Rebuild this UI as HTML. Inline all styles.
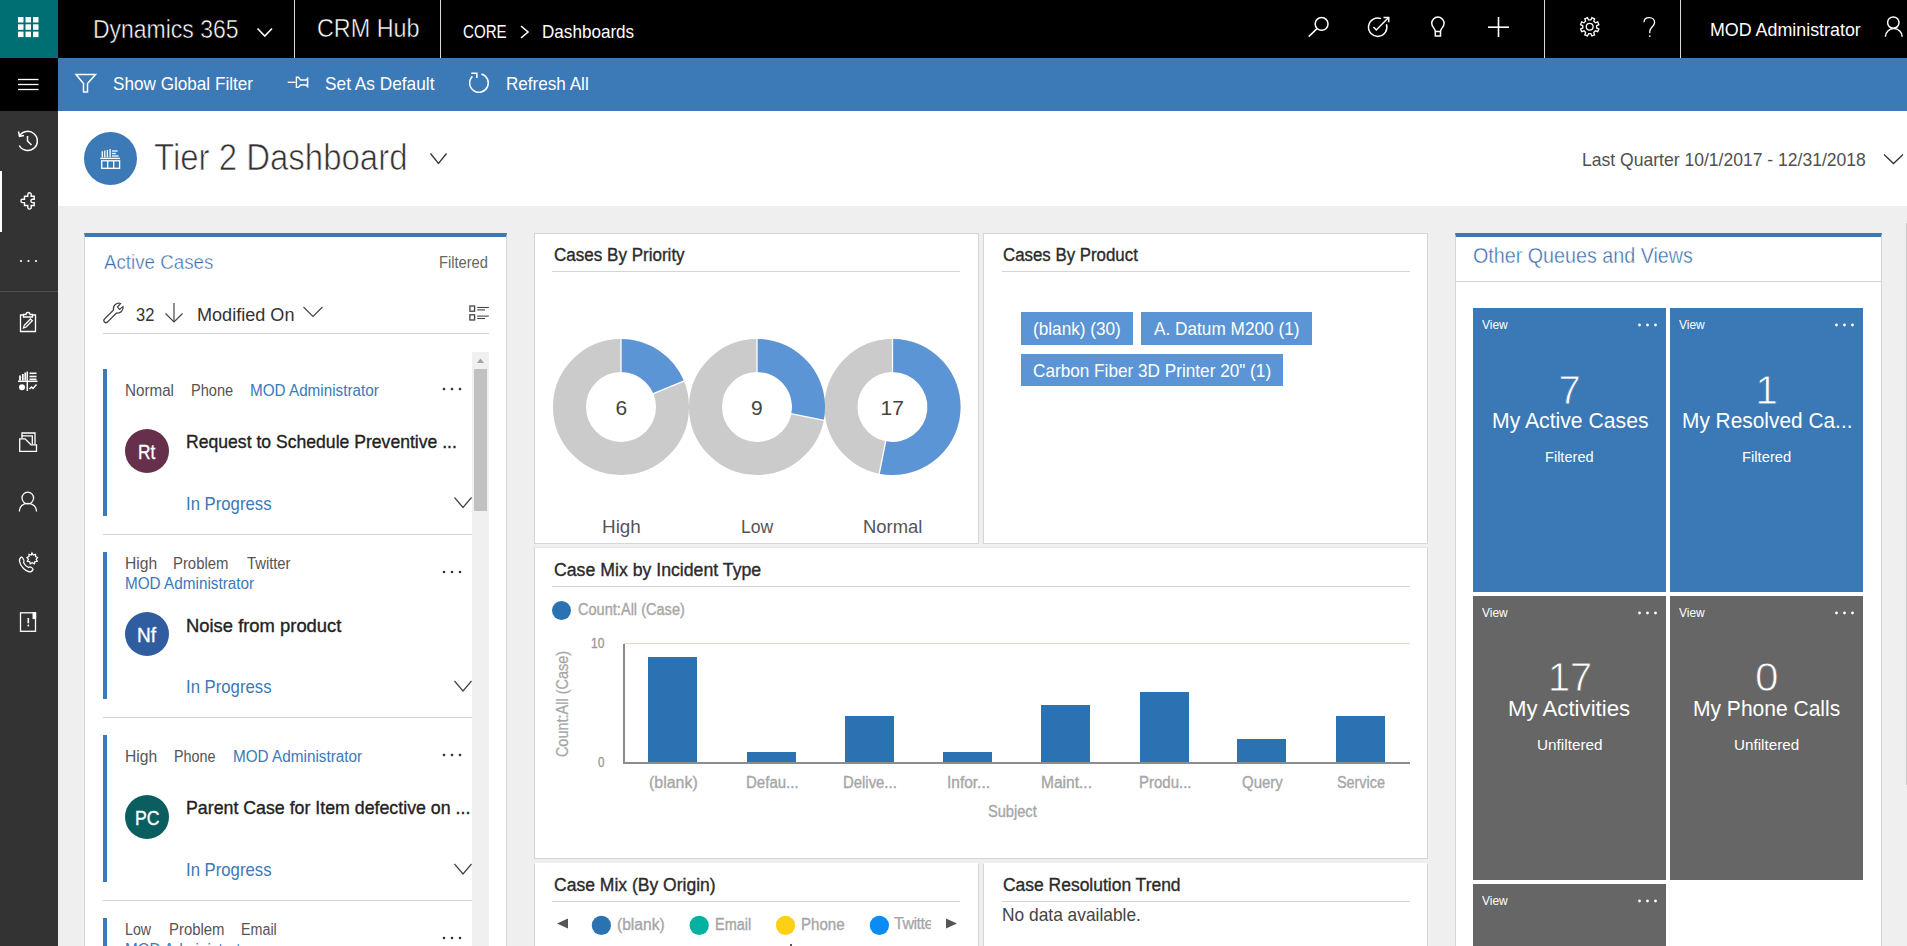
<!DOCTYPE html>
<html><head><meta charset="utf-8"><title>Tier 2 Dashboard</title>
<style>
html,body{margin:0;padding:0}
body{width:1907px;height:946px;overflow:hidden;position:relative;background:#efefef;font-family:"Liberation Sans",sans-serif}
.a{position:absolute}
.t{position:absolute;white-space:nowrap;transform-origin:0 0}
.card{position:absolute;background:#fff;border:1px solid #d6d6d6;box-sizing:border-box}
.hl{position:absolute;height:1px;background:#d4d4d4}
.bar{position:absolute;background:#2b72b2}
.tile{position:absolute;width:193px;height:284px}
svg{position:absolute;overflow:visible}

</style></head><body>
<!-- top bar -->
<div class="a" style="left:0;top:0;width:1907px;height:58px;background:#000"></div>
<div class="a" style="left:0;top:0;width:58px;height:58px;background:#006f73"></div>
<svg style="left:0;top:0" width="58" height="58"><g fill="#fff">
<rect x="18" y="17" width="5.5" height="5.5"/><rect x="25.5" y="17" width="5.5" height="5.5"/><rect x="33" y="17" width="5.5" height="5.5"/>
<rect x="18" y="24.3" width="5.5" height="5.5"/><rect x="25.5" y="24.3" width="5.5" height="5.5"/><rect x="33" y="24.3" width="5.5" height="5.5"/>
<rect x="18" y="31.6" width="5.5" height="5.5"/><rect x="25.5" y="31.6" width="5.5" height="5.5"/><rect x="33" y="31.6" width="5.5" height="5.5"/>
</g></svg>
<div class="a" style="left:294px;top:0;width:1px;height:58px;background:#d8d8d8"></div>
<div class="a" style="left:440px;top:0;width:1px;height:58px;background:#d8d8d8"></div>
<div class="a" style="left:1544px;top:0;width:1px;height:58px;background:#d8d8d8"></div>
<div class="a" style="left:1680px;top:0;width:1px;height:58px;background:#d8d8d8"></div>
<svg style="left:0;top:0" width="1907" height="58" fill="none" stroke="#fff" stroke-width="1.6">
<polyline points="257.5,28.5 264.8,36 272,28.5"/>
<polyline points="521,26 528,32 521,38"/>
<!-- search -->
<circle cx="1321.6" cy="23.9" r="6.4" stroke-width="1.5"/><line x1="1317" y1="28.6" x2="1308.7" y2="36.6" stroke-width="1.5"/>
<!-- target check -->
<path d="M1386.4,24.2 A9.2,9.2 0 1 1 1381,18.6" stroke-width="1.5"/><polyline points="1373.5,27 1376.3,30 1388.3,17.8" stroke-width="1.5"/><polyline points="1383.5,17.4 1388.7,17.4 1388.7,22.2" stroke-width="1.5"/>
<!-- bulb -->
<path d="M1435.3,31.5 C1435.3,28.5 1431.7,27 1431.7,23.3 A6.2,6.2 0 0 1 1444.1,23.3 C1444.1,27 1440.5,28.5 1440.5,31.5 Z M1435.3,31.5 V36 H1440.5 V31.5" stroke-width="1.5"/>
<!-- plus -->
<line x1="1498.5" y1="17" x2="1498.5" y2="37"/><line x1="1488" y1="27.2" x2="1509" y2="27.2"/>
<!-- person -->
<circle cx="1893.3" cy="22.6" r="5.7" stroke-width="1.5"/><path d="M1885.4,36.8 A8.4,8.2 0 0 1 1902.2,36.8" stroke-width="1.5"/>
</svg>
<!-- gear -->
<svg style="left:0;top:0" width="1907" height="58" fill="none" stroke="#fff" stroke-width="1.3"><path d="M1590.86,19.90 L1591.89,17.66 L1594.61,18.79 L1593.76,21.10 L1595.40,22.74 L1597.71,21.89 L1598.84,24.61 L1596.60,25.64 L1596.60,27.96 L1598.84,28.99 L1597.71,31.71 L1595.40,30.86 L1593.76,32.50 L1594.61,34.81 L1591.89,35.94 L1590.86,33.70 L1588.54,33.70 L1587.51,35.94 L1584.79,34.81 L1585.64,32.50 L1584.00,30.86 L1581.69,31.71 L1580.56,28.99 L1582.80,27.96 L1582.80,25.64 L1580.56,24.61 L1581.69,21.89 L1584.00,22.74 L1585.64,21.10 L1584.79,18.79 L1587.51,17.66 L1588.54,19.90 Z"/><circle cx="1589.7" cy="26.8" r="3.4"/><path d="M1644,22.3 C1644,19.2 1646.5,17.6 1649.3,17.6 C1652.4,17.6 1654.6,19.6 1654.6,22.5 C1654.6,26.2 1649.8,27.3 1649.8,31.3 V33.3"/><circle cx="1649.8" cy="36.1" r="0.85" fill="#fff" stroke="none"/></svg>

<!-- left nav -->
<div class="a" style="left:0;top:58px;width:58px;height:888px;background:#333"></div>
<div class="a" style="left:0;top:58px;width:58px;height:53px;background:#000"></div>
<div class="a" style="left:0;top:171px;width:2px;height:61px;background:#fff"></div>
<div class="a" style="left:0;top:291px;width:58px;height:1px;background:#4f4f4f"></div>
<svg style="left:0;top:0" width="58" height="946" fill="none" stroke="#fff" stroke-width="1.3">
<line x1="18" y1="79.5" x2="38.5" y2="79.5"/><line x1="18" y1="84.5" x2="38.5" y2="84.5"/><line x1="18" y1="89.5" x2="38.5" y2="89.5"/>
<!-- history -->
<g stroke-width="1.5"><path d="M19.5,136 A9.6,9.6 0 1 1 19.3,145.5"/><polyline points="18.5,131.5 19.5,136.3 24,135.5"/><polyline points="27.5,136 27.5,141 31.5,145"/></g>
<!-- puzzle -->
<path d="M24.5,196.3 H27.8 V194.4 A1.7,1.7 0 0 1 31.2,194.4 V196.3 H34.2 V199.2 H32.6 A1.7,1.7 0 0 0 32.6,202.6 H34.2 V205.5 H31.2 V207.4 A1.7,1.7 0 0 1 27.8,207.4 V205.5 H24.5 V202.6 H22.6 A1.7,1.7 0 0 1 22.6,199.2 H24.5 Z" stroke-width="1.4"/>
<!-- dots -->
<circle cx="21" cy="261" r="1.1" fill="#fff" stroke="none"/><circle cx="28.5" cy="261" r="1.1" fill="#fff" stroke="none"/><circle cx="36" cy="261" r="1.1" fill="#fff" stroke="none"/>
<!-- clipboard -->
<path d="M23.5,315 H20.5 V331.5 H35.5 V315 H32.5"/><path d="M23.5,317 V314.5 H26 A2,2 0 0 1 30,314.5 H32.5 V317 Z"/><path d="M23.5,328 L24.3,325.3 L30.5,319 L32.3,320.8 L26.1,327 Z"/>
<!-- dashboard -->
<g stroke-width="1.5"><line x1="18" y1="381.3" x2="37.5" y2="381.3"/><line x1="27.3" y1="371.5" x2="27.3" y2="391"/>
<line x1="20" y1="375.5" x2="20" y2="380.5" stroke-width="1.8"/><line x1="22.8" y1="374" x2="22.8" y2="380.5" stroke-width="1.8"/><line x1="25.3" y1="372.5" x2="25.3" y2="380.5" stroke-width="1.8"/>
<line x1="29.5" y1="373.3" x2="36.5" y2="373.3" stroke-width="1.6"/><line x1="29.5" y1="376.5" x2="36.5" y2="376.5" stroke-width="1.6"/><line x1="29.5" y1="379.3" x2="36.5" y2="379.3" stroke-width="1.6"/>
<polyline points="29.5,389 31.5,387 33,388.5 36.5,384.5"/></g>
<circle cx="22" cy="387.3" r="3" fill="#fff" stroke="none"/>
<!-- folder -->
<path d="M19.7,438.8 H25 L31,444.8 H36.5 V451.3 H19.7 Z"/><path d="M22,438.5 V433 H35 V444.5"/><path d="M21.5,435.8 H32.3 V444.5"/>
<!-- person -->
<circle cx="27.8" cy="498" r="5.8"/><path d="M19.4,511.5 C19.4,506.5 23,503.3 27.8,503.3 C32.6,503.3 36.5,506.5 36.5,511.5"/>
<!-- phone gear -->
<path d="M21.5,557 C18.5,558.5 18.5,563 23.5,568.5 C27.5,572.5 31,572.5 32.5,570.5 C33.5,569.3 33,568.5 31.5,567.5 C30,566.5 29.5,566.5 28.5,567.5 C27,567 24.5,564.5 23.5,562.5 C24.5,561.5 24.5,561 23.5,559.5 C22.5,557.5 22,556.8 21.5,557 Z"/>
<path d="M32,553 L33.3,555 L35.5,554.3 L35.6,556.5 L37.5,557.5 L36.2,559.3 L37.2,561.3 L35,561.6 L34.3,563.8 L32.3,562.7 L30.3,563.8 L29.6,561.6 L27.4,561.3 L28.4,559.3 L27,557.5 L29,556.5 L29,554.3 L31.2,555 Z"/>
<!-- book -->
<rect x="20.5" y="612.8" width="15" height="18.5"/><rect x="33.2" y="612.8" width="2.3" height="5.6" fill="#fff"/><line x1="28.3" y1="618" x2="28.3" y2="623.3" stroke-width="1.6"/><circle cx="28.3" cy="625.5" r="0.9" fill="#fff" stroke="none"/>
</svg>

<!-- command bar -->
<div class="a" style="left:58px;top:58px;width:1849px;height:53px;background:#3b79b7"></div>
<svg style="left:0;top:58px" width="600" height="53" fill="none" stroke="#fff" stroke-width="1.5">
<path d="M76,16.5 H95.5 L87.5,25.5 V34 H83.5 V25.5 Z"/>
<path d="M287.7,24.3 H295.5" stroke-width="1.3"/><path d="M296.4,19.3 H298.5 L300.5,22 H306 L307.6,20.4 V28.6 L306,27 H300.5 L298.5,29.4 H296.4 Z" stroke-width="1.4"/>
<path d="M481.4,16 A9.3,9.3 0 1 1 472.4,18.4" stroke-width="1.5"/><polyline points="471.3,15.3 476.8,15.3 476.8,20" stroke-width="1.6"/>
</svg>

<!-- header -->
<div class="a" style="left:58px;top:111px;width:1849px;height:95px;background:#fff"></div>
<div class="a" style="left:84px;top:132px;width:53px;height:53px;border-radius:50%;background:#3b79b7"></div>
<svg style="left:0;top:0" width="1907" height="206" fill="none" stroke="#fff" stroke-width="1.3">
<g stroke-width="1.3"><line x1="100.3" y1="158.4" x2="120" y2="158.4"/>
<rect x="101.7" y="160.8" width="17.9" height="7.5"/><line x1="107.7" y1="160.8" x2="107.7" y2="168.3"/><line x1="113.7" y1="160.8" x2="113.7" y2="168.3"/>
<line x1="102.3" y1="151.2" x2="102.3" y2="157.5"/><line x1="104.8" y1="150.4" x2="104.8" y2="157.5"/><line x1="107.4" y1="150" x2="107.4" y2="157.5"/><line x1="110.1" y1="149" x2="110.1" y2="157.5"/>
<line x1="112" y1="151" x2="117.6" y2="151"/><line x1="112" y1="153.5" x2="115.8" y2="153.5"/><line x1="112" y1="156" x2="118.5" y2="156"/></g>
<polyline points="430.5,153.5 438.5,163.5 446.5,153.5" stroke="#333"/>
<polyline points="1884,154.5 1893.5,163.5 1903,154.5" stroke="#333"/>
</svg>

<!-- page right line -->
<div class="a" style="left:1906px;top:223px;width:1px;height:562px;background:#cfcfcf"></div>

<!-- Active cases card -->
<div class="card" style="left:84px;top:233px;width:423px;height:760px;border-top:4px solid #3b79b7"></div>
<div class="hl" style="left:103px;top:333px;width:386px"></div>
<svg style="left:0;top:0" width="520" height="946" fill="none" stroke="#444" stroke-width="1.2">
<!-- wrench -->
<path d="M104.5,319 L113.5,310 A5.5,5.5 0 0 1 120.5,303.5 L117.5,307 L119.5,309.5 L123,306.5 A5.5,5.5 0 0 1 116.5,313 L107.5,322 A2,2 0 0 1 104.5,319 Z"/>
<!-- arrow down -->
<line x1="174" y1="303" x2="174" y2="322"/><polyline points="165.5,313.5 174,322 182.5,313.5"/>
<!-- chevron -->
<polyline points="303.5,307 313,316.5 322.5,307"/>
<!-- list icon -->
<rect x="469.9" y="306" width="4.7" height="5.2" stroke-width="1.3"/><rect x="469.9" y="314.8" width="4.7" height="5.2" stroke-width="1.3"/>
<line x1="477.2" y1="307.5" x2="488.8" y2="307.5" stroke-width="1.1"/><line x1="477.2" y1="309.9" x2="485" y2="309.9" stroke-width="1.1"/><line x1="477.2" y1="316.1" x2="488.8" y2="316.1" stroke-width="1.1"/><line x1="477.2" y1="318.5" x2="485" y2="318.5" stroke-width="1.1"/>
</svg>
<!-- scrollbar -->
<div class="a" style="left:472px;top:352px;width:17px;height:600px;background:#f0f0f0"></div>
<div class="a" style="left:474px;top:369px;width:13px;height:142px;background:#c1c1c1"></div>
<svg style="left:0;top:0" width="520" height="946"><polygon points="477,363 480.5,358.5 484,363" fill="#a3a3a3"/></svg>
<!-- items -->
<div class="a" style="left:103px;top:369px;width:4px;height:147px;background:#3b79b7"></div>
<div class="a" style="left:103px;top:552px;width:4px;height:147px;background:#3b79b7"></div>
<div class="a" style="left:103px;top:735px;width:4px;height:147px;background:#3b79b7"></div>
<div class="a" style="left:103px;top:918px;width:4px;height:40px;background:#3b79b7"></div>
<div class="hl" style="left:103px;top:534px;width:369px"></div>
<div class="hl" style="left:103px;top:717px;width:369px"></div>
<div class="hl" style="left:103px;top:900px;width:369px"></div>
<div class="a" style="left:125px;top:429px;width:44px;height:44px;border-radius:50%;background:#662f4b"></div>
<div class="a" style="left:125px;top:612px;width:44px;height:44px;border-radius:50%;background:#2f5d9f"></div>
<div class="a" style="left:125px;top:795px;width:44px;height:44px;border-radius:50%;background:#0b5e5f"></div>
<svg style="left:0;top:0" width="520" height="946" fill="#333">
<circle cx="444" cy="389" r="1.3"/><circle cx="452" cy="389" r="1.3"/><circle cx="460" cy="389" r="1.3"/>
<circle cx="444" cy="572" r="1.3"/><circle cx="452" cy="572" r="1.3"/><circle cx="460" cy="572" r="1.3"/>
<circle cx="444" cy="755" r="1.3"/><circle cx="452" cy="755" r="1.3"/><circle cx="460" cy="755" r="1.3"/>
<circle cx="444" cy="938" r="1.3"/><circle cx="452" cy="938" r="1.3"/><circle cx="460" cy="938" r="1.3"/>
<g fill="none" stroke="#444" stroke-width="1.2">
<polyline points="454.5,497.5 463,507.5 471.5,497.5"/>
<polyline points="454.5,681 463,691 471.5,681"/>
<polyline points="454.5,864 463,874 471.5,864"/>
</g></svg>

<!-- priority card -->
<div class="card" style="left:534px;top:233px;width:445px;height:311px"></div>
<div class="hl" style="left:552px;top:271px;width:408px"></div>
<svg style="left:0;top:0" width="1000" height="560">
<g fill="none" stroke-width="33">
<circle cx="621" cy="407" r="51.5" stroke="#cbcbcb"/>
<circle cx="757" cy="407" r="51.5" stroke="#cbcbcb"/>
<circle cx="892.5" cy="407" r="51.5" stroke="#cbcbcb"/>
</g>
<path d="M621.00,339.00 A68,68 0 0 1 683.82,380.98 L653.34,393.61 A35,35 0 0 0 621.00,372.00 Z" fill="#5b95d5"/>
<line x1="621.00" y1="372.50" x2="621.00" y2="338.50" stroke="#fff" stroke-width="1.3"/>
<line x1="652.87" y1="393.80" x2="684.29" y2="380.79" stroke="#fff" stroke-width="1.3"/>
<path d="M757.00,339.00 A68,68 0 0 1 823.69,420.27 L791.33,413.83 A35,35 0 0 0 757.00,372.00 Z" fill="#5b95d5"/>
<line x1="757.00" y1="372.50" x2="757.00" y2="338.50" stroke="#fff" stroke-width="1.3"/>
<line x1="790.84" y1="413.73" x2="824.18" y2="420.36" stroke="#fff" stroke-width="1.3"/>
<path d="M892.50,339.00 A68,68 0 1 1 879.23,473.69 L885.67,441.33 A35,35 0 1 0 892.50,372.00 Z" fill="#5b95d5"/>
<line x1="892.50" y1="372.50" x2="892.50" y2="338.50" stroke="#fff" stroke-width="1.3"/>
<line x1="885.77" y1="440.84" x2="879.14" y2="474.18" stroke="#fff" stroke-width="1.3"/>

</svg>
<!-- product card -->
<div class="card" style="left:983px;top:233px;width:445px;height:311px"></div>
<div class="hl" style="left:1002px;top:271px;width:408px"></div>
<div class="a" style="left:1021px;top:312px;width:112px;height:33px;background:#5b95d5"></div>
<div class="a" style="left:1141px;top:312px;width:171px;height:33px;background:#5b95d5"></div>
<div class="a" style="left:1021px;top:354px;width:262px;height:32px;background:#5b95d5"></div>

<!-- incident card -->
<div class="card" style="left:534px;top:547px;width:894px;height:312px;border-top-color:#e6e6e6"></div>
<div class="hl" style="left:552px;top:586px;width:858px"></div>
<div class="a" style="left:552px;top:601px;width:19px;height:19px;border-radius:50%;background:#2b72b2"></div>
<div class="a" style="left:624px;top:643px;width:786px;height:1px;background:#bfe0f8"></div>
<div class="a" style="left:623px;top:644px;width:2px;height:120px;background:#8b8b91"></div>
<div class="a" style="left:623px;top:762px;width:787px;height:2px;background:#8b8b91"></div>
<div class="bar" style="left:648px;top:657px;width:49px;height:105px"></div>
<div class="bar" style="left:747px;top:752px;width:49px;height:10px"></div>
<div class="bar" style="left:845px;top:716px;width:49px;height:46px"></div>
<div class="bar" style="left:943px;top:752px;width:49px;height:10px"></div>
<div class="bar" style="left:1041px;top:705px;width:49px;height:57px"></div>
<div class="bar" style="left:1140px;top:692px;width:49px;height:70px"></div>
<div class="bar" style="left:1237px;top:739px;width:49px;height:23px"></div>
<div class="bar" style="left:1336px;top:716px;width:49px;height:46px"></div>
<div class="t" style="left:503.7px;top:696px;width:118px;text-align:center;font-size:16px;line-height:16px;color:#a6a6a6;-webkit-text-stroke:0.25px currentColor;transform-origin:50% 50%;transform:rotate(-90deg) scaleX(0.905)">Count:All (Case)</div>

<!-- origin card -->
<div class="card" style="left:534px;top:863px;width:445px;height:100px;border-top-color:#fff"></div>
<div class="hl" style="left:552px;top:901px;width:408px"></div>
<svg style="left:0;top:0" width="1000" height="946">
<polygon points="557,923.5 568,918.5 568,928.5" fill="#555"/>
<polygon points="957,923.5 946,918.5 946,928.5" fill="#555"/>
<circle cx="601.4" cy="925.4" r="9.6" fill="#2b72b2"/>
<circle cx="699.2" cy="925.4" r="9.6" fill="#01b2a0"/>
<circle cx="785.5" cy="925.4" r="9.6" fill="#fdd017"/>
<circle cx="879.4" cy="925.4" r="9.6" fill="#0a8cf5"/>
</svg>
<div class="t" style="left:894px;top:916px;width:37px;overflow:hidden;font-size:16px;line-height:16px;color:#a6a6a6;-webkit-text-stroke:0.25px currentColor;letter-spacing:-0.5px">Twitter</div>
<div class="a" style="left:789.5px;top:944px;width:2px;height:2px;background:#555"></div>
<!-- trend card -->
<div class="card" style="left:983px;top:863px;width:445px;height:100px;border-top-color:#fff"></div>
<div class="hl" style="left:1002px;top:901px;width:408px"></div>

<!-- queues card -->
<div class="card" style="left:1455px;top:233px;width:427px;height:760px;border-top:4px solid #3b79b7"></div>
<div class="hl" style="left:1456px;top:281px;width:425px"></div>
<div class="tile" style="left:1473px;top:308px;background:#3b78b6"></div>
<div class="tile" style="left:1670px;top:308px;background:#3b78b6"></div>
<div class="tile" style="left:1473px;top:596px;background:#666"></div>
<div class="tile" style="left:1670px;top:596px;background:#666"></div>
<div class="tile" style="left:1473px;top:884px;background:#666"></div>
<svg style="left:0;top:0" width="1907" height="946" fill="#fff">
<circle cx="1639.5" cy="325" r="1.4"/><circle cx="1647.5" cy="325" r="1.4"/><circle cx="1655.5" cy="325" r="1.4"/>
<circle cx="1836.5" cy="325" r="1.4"/><circle cx="1844.5" cy="325" r="1.4"/><circle cx="1852.5" cy="325" r="1.4"/>
<circle cx="1639.5" cy="613" r="1.4"/><circle cx="1647.5" cy="613" r="1.4"/><circle cx="1655.5" cy="613" r="1.4"/>
<circle cx="1836.5" cy="613" r="1.4"/><circle cx="1844.5" cy="613" r="1.4"/><circle cx="1852.5" cy="613" r="1.4"/>
<circle cx="1639.5" cy="901" r="1.4"/><circle cx="1647.5" cy="901" r="1.4"/><circle cx="1655.5" cy="901" r="1.4"/>
</svg>

<div class="t" style="left:93.2px;top:16.5px;font-size:25px;line-height:25px;transform:scaleX(0.9186);color:#fff;font-weight:400;-webkit-text-stroke:0.5px #000;">Dynamics 365</div>
<div class="t" style="left:316.5px;top:15.0px;font-size:26px;line-height:26px;transform:scaleX(0.8982);color:#fff;font-weight:400;-webkit-text-stroke:0.5px #000;">CRM Hub</div>
<div class="t" style="left:462.5px;top:22.8px;font-size:18.6px;line-height:18.6px;transform:scaleX(0.8135);color:#fff;font-weight:400;">CORE</div>
<div class="t" style="left:542.1px;top:22.8px;font-size:18.6px;line-height:18.6px;transform:scaleX(0.9192);color:#fff;font-weight:400;">Dashboards</div>
<div class="t" style="left:1709.5px;top:19.7px;font-size:19px;line-height:19px;transform:scaleX(0.9394);color:#fff;font-weight:400;">MOD Administrator</div>
<div class="t" style="left:112.5px;top:73.7px;font-size:19px;line-height:19px;transform:scaleX(0.9019);color:#fff;font-weight:400;">Show Global Filter</div>
<div class="t" style="left:324.7px;top:73.7px;font-size:19px;line-height:19px;transform:scaleX(0.9092);color:#fff;font-weight:400;">Set As Default</div>
<div class="t" style="left:506.1px;top:73.7px;font-size:19px;line-height:19px;transform:scaleX(0.9000);color:#fff;font-weight:400;">Refresh All</div>
<div class="t" style="left:154.1px;top:140.0px;font-size:36px;line-height:36px;transform:scaleX(0.9158);color:#333333;font-weight:400;-webkit-text-stroke:0.7px #fff;">Tier 2 Dashboard</div>
<div class="t" style="left:1581.5px;top:150.0px;font-size:19px;line-height:19px;transform:scaleX(0.9235);color:#505050;font-weight:400;">Last Quarter 10/1/2017 - 12/31/2018</div>
<div class="t" style="left:103.6px;top:252.0px;font-size:20px;line-height:20px;transform:scaleX(0.9371);color:#3a6db0;font-weight:400;-webkit-text-stroke:0.4px #fff;">Active Cases</div>
<div class="t" style="left:438.9px;top:255.0px;font-size:16px;line-height:16px;transform:scaleX(0.9154);color:#666;font-weight:400;">Filtered</div>
<div class="t" style="left:135.9px;top:305.5px;font-size:18px;line-height:18px;transform:scaleX(0.9158);color:#333;font-weight:400;">32</div>
<div class="t" style="left:197.2px;top:305.5px;font-size:18px;line-height:18px;transform:scaleX(1.0042);color:#333;font-weight:400;">Modified On</div>
<div class="t" style="left:124.8px;top:383.0px;font-size:16px;line-height:16px;transform:scaleX(0.9500);color:#555555;font-weight:400;">Normal</div>
<div class="t" style="left:190.9px;top:383.0px;font-size:16px;line-height:16px;transform:scaleX(0.9111);color:#555555;font-weight:400;">Phone</div>
<div class="t" style="left:250.0px;top:383.0px;font-size:16px;line-height:16px;transform:scaleX(0.9530);color:#3b79b7;font-weight:400;">MOD Administrator</div>
<div class="t" style="left:137.9px;top:442.0px;font-size:20px;line-height:20px;transform:scaleX(0.8650);color:#fff;font-weight:400;-webkit-text-stroke:0.35px currentColor;">Rt</div>
<div class="t" style="left:186.1px;top:432.0px;font-size:19px;line-height:19px;transform:scaleX(0.9259);color:#222;font-weight:400;-webkit-text-stroke:0.35px currentColor;">Request to Schedule Preventive ...</div>
<div class="t" style="left:186.1px;top:494.0px;font-size:19px;line-height:19px;transform:scaleX(0.8802);color:#3b79b7;font-weight:400;">In Progress</div>
<div class="t" style="left:124.6px;top:556.0px;font-size:16px;line-height:16px;transform:scaleX(0.9774);color:#555555;font-weight:400;">High</div>
<div class="t" style="left:173.4px;top:556.0px;font-size:16px;line-height:16px;transform:scaleX(0.9293);color:#555555;font-weight:400;">Problem</div>
<div class="t" style="left:247.2px;top:556.0px;font-size:16px;line-height:16px;transform:scaleX(0.9234);color:#555555;font-weight:400;">Twitter</div>
<div class="t" style="left:124.6px;top:576.2px;font-size:16px;line-height:16px;transform:scaleX(0.9552);color:#3b79b7;font-weight:400;">MOD Administrator</div>
<div class="t" style="left:136.6px;top:625.0px;font-size:20px;line-height:20px;transform:scaleX(0.9500);color:#fff;font-weight:400;-webkit-text-stroke:0.35px currentColor;">Nf</div>
<div class="t" style="left:186.0px;top:615.5px;font-size:19px;line-height:19px;transform:scaleX(0.9681);color:#222;font-weight:400;-webkit-text-stroke:0.35px currentColor;">Noise from product</div>
<div class="t" style="left:186.1px;top:677.0px;font-size:19px;line-height:19px;transform:scaleX(0.8802);color:#3b79b7;font-weight:400;">In Progress</div>
<div class="t" style="left:124.6px;top:749.4px;font-size:16px;line-height:16px;transform:scaleX(0.9774);color:#555555;font-weight:400;">High</div>
<div class="t" style="left:173.5px;top:749.4px;font-size:16px;line-height:16px;transform:scaleX(0.8978);color:#555555;font-weight:400;">Phone</div>
<div class="t" style="left:232.5px;top:749.4px;font-size:16px;line-height:16px;transform:scaleX(0.9552);color:#3b79b7;font-weight:400;">MOD Administrator</div>
<div class="t" style="left:134.6px;top:808.0px;font-size:20px;line-height:20px;transform:scaleX(0.8846);color:#fff;font-weight:400;-webkit-text-stroke:0.35px currentColor;">PC</div>
<div class="t" style="left:186.1px;top:798.0px;font-size:19px;line-height:19px;transform:scaleX(0.9348);color:#222;font-weight:400;-webkit-text-stroke:0.35px currentColor;">Parent Case for Item defective on ...</div>
<div class="t" style="left:186.1px;top:860.0px;font-size:19px;line-height:19px;transform:scaleX(0.8802);color:#3b79b7;font-weight:400;">In Progress</div>
<div class="t" style="left:124.5px;top:921.6px;font-size:16px;line-height:16px;transform:scaleX(0.8897);color:#555555;font-weight:400;">Low</div>
<div class="t" style="left:168.5px;top:921.6px;font-size:16px;line-height:16px;transform:scaleX(0.9310);color:#555555;font-weight:400;">Problem</div>
<div class="t" style="left:240.9px;top:921.6px;font-size:16px;line-height:16px;transform:scaleX(0.8947);color:#555555;font-weight:400;">Email</div>
<div class="t" style="left:124.6px;top:941.8px;font-size:16px;line-height:16px;transform:scaleX(0.9552);color:#3b79b7;font-weight:400;">MOD Administrator</div>
<div class="t" style="left:553.8px;top:246.0px;font-size:18px;line-height:18px;transform:scaleX(0.9464);color:#2b2b2b;font-weight:400;-webkit-text-stroke:0.35px currentColor;">Cases By Priority</div>
<div class="t" style="left:615.5px;top:397.3px;font-size:21px;line-height:21px;transform:scaleX(1.0000);color:#444;font-weight:400;">6</div>
<div class="t" style="left:751.1px;top:397.3px;font-size:21px;line-height:21px;transform:scaleX(1.0000);color:#444;font-weight:400;">9</div>
<div class="t" style="left:880.5px;top:397.3px;font-size:21px;line-height:21px;transform:scaleX(1.0000);color:#444;font-weight:400;">17</div>
<div class="t" style="left:602.4px;top:518.7px;font-size:17.5px;line-height:17.5px;transform:scaleX(1.0794);color:#555555;font-weight:400;">High</div>
<div class="t" style="left:740.5px;top:518.7px;font-size:17.5px;line-height:17.5px;transform:scaleX(1.0065);color:#555555;font-weight:400;">Low</div>
<div class="t" style="left:863.4px;top:518.7px;font-size:17.5px;line-height:17.5px;transform:scaleX(1.0509);color:#555555;font-weight:400;">Normal</div>
<div class="t" style="left:1003.1px;top:246.0px;font-size:18px;line-height:18px;transform:scaleX(0.9359);color:#2b2b2b;font-weight:400;-webkit-text-stroke:0.35px currentColor;">Cases By Product</div>
<div class="t" style="left:1033.1px;top:319.2px;font-size:19px;line-height:19px;transform:scaleX(0.9042);color:#fff;font-weight:400;">(blank) (30)</div>
<div class="t" style="left:1154.0px;top:319.2px;font-size:19px;line-height:19px;transform:scaleX(0.9062);color:#fff;font-weight:400;">A. Datum M200 (1)</div>
<div class="t" style="left:1032.6px;top:361.2px;font-size:19px;line-height:19px;transform:scaleX(0.9042);color:#fff;font-weight:400;">Carbon Fiber 3D Printer 20&quot; (1)</div>
<div class="t" style="left:553.8px;top:560.6px;font-size:18px;line-height:18px;transform:scaleX(0.9829);color:#2b2b2b;font-weight:400;-webkit-text-stroke:0.35px currentColor;">Case Mix by Incident Type</div>
<div class="t" style="left:577.8px;top:602.0px;font-size:16px;line-height:16px;transform:scaleX(0.9103);color:#a6a6a6;font-weight:400;-webkit-text-stroke:0.35px currentColor;">Count:All (Case)</div>
<div class="t" style="left:590.8px;top:636.0px;font-size:14px;line-height:14px;transform:scaleX(0.8600);color:#999;font-weight:400;-webkit-text-stroke:0.35px currentColor;">10</div>
<div class="t" style="left:598.0px;top:755.0px;font-size:14px;line-height:14px;transform:scaleX(0.8250);color:#999;font-weight:400;-webkit-text-stroke:0.35px currentColor;">0</div>
<div class="t" style="left:649.2px;top:774.7px;font-size:16px;line-height:16px;transform:scaleX(0.9957);color:#a6a6a6;font-weight:400;-webkit-text-stroke:0.35px currentColor;">(blank)</div>
<div class="t" style="left:745.8px;top:774.7px;font-size:16px;line-height:16px;transform:scaleX(0.9389);color:#a6a6a6;font-weight:400;-webkit-text-stroke:0.35px currentColor;">Defau...</div>
<div class="t" style="left:843.3px;top:774.7px;font-size:16px;line-height:16px;transform:scaleX(0.9304);color:#a6a6a6;font-weight:400;-webkit-text-stroke:0.35px currentColor;">Delive...</div>
<div class="t" style="left:946.5px;top:774.7px;font-size:16px;line-height:16px;transform:scaleX(0.9674);color:#a6a6a6;font-weight:400;-webkit-text-stroke:0.35px currentColor;">Infor...</div>
<div class="t" style="left:1040.8px;top:774.7px;font-size:16px;line-height:16px;transform:scaleX(0.9725);color:#a6a6a6;font-weight:400;-webkit-text-stroke:0.35px currentColor;">Maint...</div>
<div class="t" style="left:1138.5px;top:774.7px;font-size:16px;line-height:16px;transform:scaleX(0.9370);color:#a6a6a6;font-weight:400;-webkit-text-stroke:0.35px currentColor;">Produ...</div>
<div class="t" style="left:1242.2px;top:774.7px;font-size:16px;line-height:16px;transform:scaleX(0.9341);color:#a6a6a6;font-weight:400;-webkit-text-stroke:0.35px currentColor;">Query</div>
<div class="t" style="left:1337.2px;top:774.7px;font-size:16px;line-height:16px;transform:scaleX(0.8981);color:#a6a6a6;font-weight:400;-webkit-text-stroke:0.35px currentColor;">Service</div>
<div class="t" style="left:987.8px;top:804.0px;font-size:16px;line-height:16px;transform:scaleX(0.9130);color:#a6a6a6;font-weight:400;-webkit-text-stroke:0.35px currentColor;">Subject</div>
<div class="t" style="left:553.7px;top:876.0px;font-size:18px;line-height:18px;transform:scaleX(0.9739);color:#2b2b2b;font-weight:400;-webkit-text-stroke:0.35px currentColor;">Case Mix (By Origin)</div>
<div class="t" style="left:617.1px;top:916.7px;font-size:16px;line-height:16px;transform:scaleX(0.9745);color:#a6a6a6;font-weight:400;-webkit-text-stroke:0.35px currentColor;">(blank)</div>
<div class="t" style="left:714.8px;top:916.7px;font-size:16px;line-height:16px;transform:scaleX(0.9051);color:#a6a6a6;font-weight:400;-webkit-text-stroke:0.35px currentColor;">Email</div>
<div class="t" style="left:800.7px;top:916.7px;font-size:16px;line-height:16px;transform:scaleX(0.9400);color:#a6a6a6;font-weight:400;-webkit-text-stroke:0.35px currentColor;">Phone</div>
<div class="t" style="left:1002.9px;top:876.0px;font-size:18px;line-height:18px;transform:scaleX(0.9698);color:#2b2b2b;font-weight:400;-webkit-text-stroke:0.35px currentColor;">Case Resolution Trend</div>
<div class="t" style="left:1002.0px;top:904.7px;font-size:19px;line-height:19px;transform:scaleX(0.9133);color:#444;font-weight:400;">No data available.</div>
<div class="t" style="left:1472.5px;top:245.4px;font-size:22px;line-height:22px;transform:scaleX(0.8959);color:#3a6db0;font-weight:400;-webkit-text-stroke:0.4px #fff;">Other Queues and Views</div>
<div class="t" style="left:1482.2px;top:318.9px;font-size:12.5px;line-height:12.5px;transform:scaleX(0.9593);color:#fff;font-weight:400;">View</div>
<div class="t" style="left:1558.4px;top:369.8px;font-size:40px;line-height:40px;transform:scaleX(1.0000);color:#fff;font-weight:400;-webkit-text-stroke:0.8px #3b78b6;">7</div>
<div class="t" style="left:1491.5px;top:409.7px;font-size:22px;line-height:22px;transform:scaleX(0.9627);color:#fff;font-weight:400;">My Active Cases</div>
<div class="t" style="left:1545.0px;top:448.7px;font-size:15px;line-height:15px;transform:scaleX(0.9714);color:#fff;font-weight:400;">Filtered</div>
<div class="t" style="left:1679.2px;top:318.9px;font-size:12.5px;line-height:12.5px;transform:scaleX(0.9593);color:#fff;font-weight:400;">View</div>
<div class="t" style="left:1755.4px;top:369.8px;font-size:40px;line-height:40px;transform:scaleX(1.0000);color:#fff;font-weight:400;-webkit-text-stroke:0.8px #3b78b6;">1</div>
<div class="t" style="left:1682.3px;top:409.7px;font-size:22px;line-height:22px;transform:scaleX(0.9486);color:#fff;font-weight:400;">My Resolved Ca...</div>
<div class="t" style="left:1741.6px;top:448.7px;font-size:15px;line-height:15px;transform:scaleX(0.9857);color:#fff;font-weight:400;">Filtered</div>
<div class="t" style="left:1482.2px;top:607.1px;font-size:12.5px;line-height:12.5px;transform:scaleX(0.9593);color:#fff;font-weight:400;">View</div>
<div class="t" style="left:1547.7px;top:657.4px;font-size:40px;line-height:40px;transform:scaleX(0.9923);color:#fff;font-weight:400;-webkit-text-stroke:0.8px #666;">17</div>
<div class="t" style="left:1508.3px;top:698.2px;font-size:22px;line-height:22px;transform:scaleX(1.0092);color:#fff;font-weight:400;">My Activities</div>
<div class="t" style="left:1536.5px;top:737.2px;font-size:15px;line-height:15px;transform:scaleX(1.0206);color:#fff;font-weight:400;">Unfiltered</div>
<div class="t" style="left:1679.2px;top:607.1px;font-size:12.5px;line-height:12.5px;transform:scaleX(0.9593);color:#fff;font-weight:400;">View</div>
<div class="t" style="left:1754.8px;top:657.4px;font-size:40px;line-height:40px;transform:scaleX(1.0579);color:#fff;font-weight:400;-webkit-text-stroke:0.8px #666;">0</div>
<div class="t" style="left:1692.8px;top:698.2px;font-size:22px;line-height:22px;transform:scaleX(0.9556);color:#fff;font-weight:400;">My Phone Calls</div>
<div class="t" style="left:1733.8px;top:737.2px;font-size:15px;line-height:15px;transform:scaleX(1.0143);color:#fff;font-weight:400;">Unfiltered</div>
<div class="t" style="left:1482.2px;top:895.3px;font-size:12.5px;line-height:12.5px;transform:scaleX(0.9593);color:#fff;font-weight:400;">View</div>
</body></html>
